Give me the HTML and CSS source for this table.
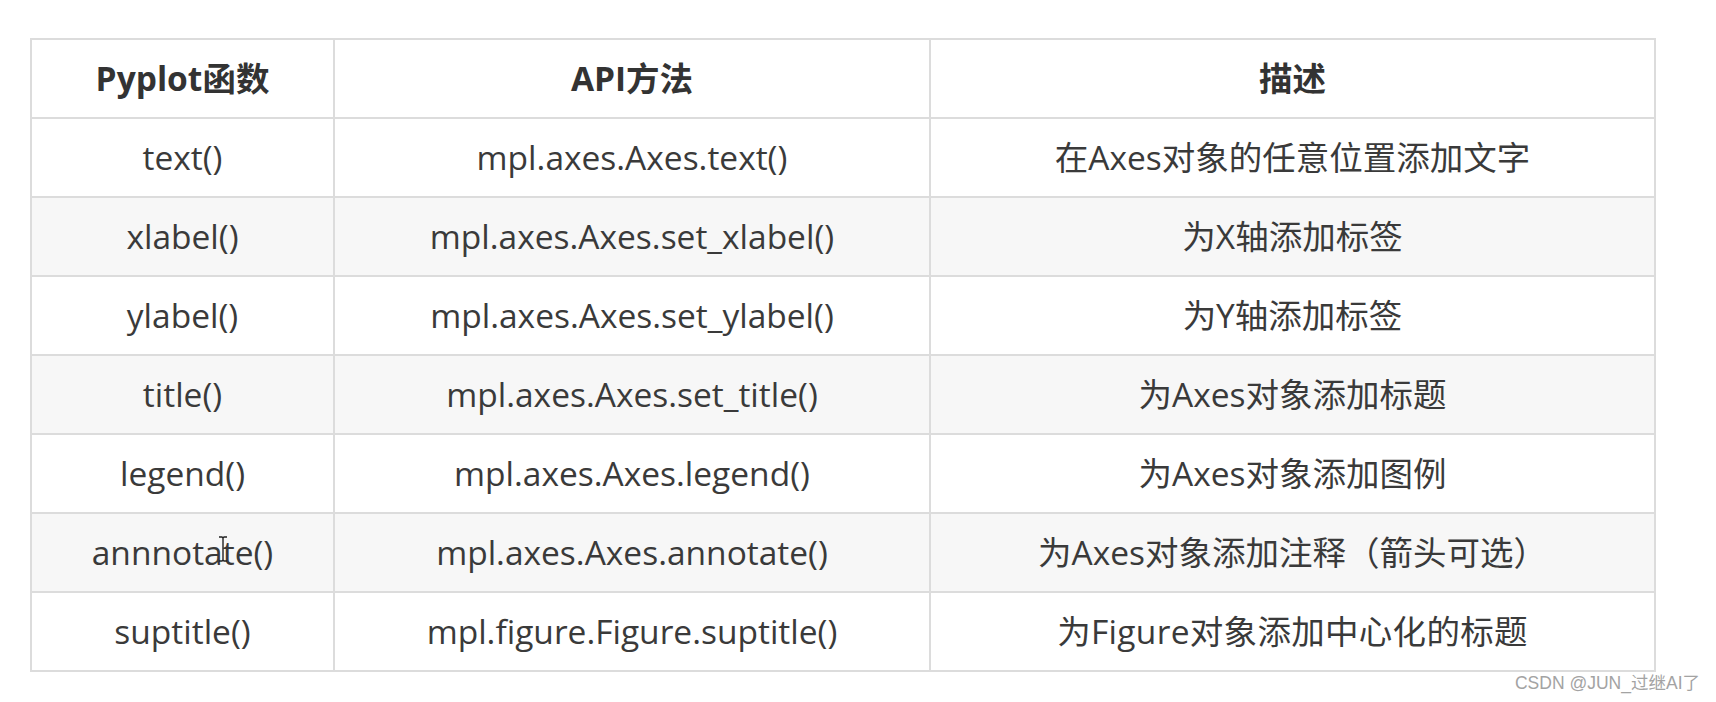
FILE: index.html
```html
<!DOCTYPE html>
<html lang="zh-CN">
<head>
<meta charset="utf-8">
<title>Pyplot 函数</title>
<link rel="stylesheet" href="styles.css">
</head>
<body>
<div class="page">
  <table class="api">
    <colgroup>
      <col class="c1">
      <col class="c2">
      <col class="c3">
    </colgroup>
    <thead>
      <tr><th>Pyplot函数</th><th>API方法</th><th>描述</th></tr>
    </thead>
    <tbody>
      <tr><td>text()</td><td>mpl.axes.Axes.text()</td><td>在Axes对象的任意位置添加文字</td></tr>
      <tr><td>xlabel()</td><td>mpl.axes.Axes.set_xlabel()</td><td>为X轴添加标签</td></tr>
      <tr><td>ylabel()</td><td>mpl.axes.Axes.set_ylabel()</td><td>为Y轴添加标签</td></tr>
      <tr><td>title()</td><td>mpl.axes.Axes.set_title()</td><td>为Axes对象添加标题</td></tr>
      <tr><td>legend()</td><td>mpl.axes.Axes.legend()</td><td>为Axes对象添加图例</td></tr>
      <tr><td><span class="cursor-host">annnotate()<svg class="ibeam" width="10" height="26" viewBox="0 0 10 26"><path d="M1 1h3l1 1 1-1h3M5 2v22M1 25h3l1-1 1 1h3" fill="none" stroke="#222" stroke-width="1.4"/></svg></span></td><td>mpl.axes.Axes.annotate()</td><td>为Axes对象添加注释（箭头可选）</td></tr>
      <tr><td>suptitle()</td><td>mpl.figure.Figure.suptitle()</td><td><span class="wide">为Figure对象添加中心化的标题</span></td></tr>
    </tbody>
  </table>
  <div class="watermark">CSDN @JUN_过继AI了</div>
</div>
</body>
</html>
```
FILE: styles.css
```css
html, body {
  margin: 0;
  padding: 0;
  background: #ffffff;
}

.page {
  padding: 38px 0 0 30px;
  width: 1686px;
}

.api {
  border-collapse: collapse;
  table-layout: fixed;
  width: 1624px;
  font-family: "Open Sans", "Noto Sans CJK SC", sans-serif;
  font-size: 33.5px;
  color: #3a3a3a;
}

.c1 { width: 303px; }
.c2 { width: 596px; }
.c3 { width: 725px; }

.api th,
.api td {
  border: 2px solid #dcdcdc;
  height: 77px;
  padding: 0;
  text-align: center;
  vertical-align: middle;
  white-space: nowrap;
  line-height: 1.2;
}

.api th {
  height: 77px;
  font-weight: 700;
  color: #333333;
}

.api tbody tr:nth-child(even) td {
  background: #f7f7f7;
}

.wide {
  letter-spacing: 0.3px;
}

.cursor-host {
  position: relative;
}

.ibeam {
  position: absolute;
  left: 126px;
  top: 7px;
}

.watermark {
  text-align: right;
  padding-right: 16px;
  margin-top: 0;
  font-family: "Liberation Sans", "Noto Sans CJK SC", sans-serif;
  font-size: 17.5px;
  line-height: 22px;
  color: #a3a3a3;
}
```
